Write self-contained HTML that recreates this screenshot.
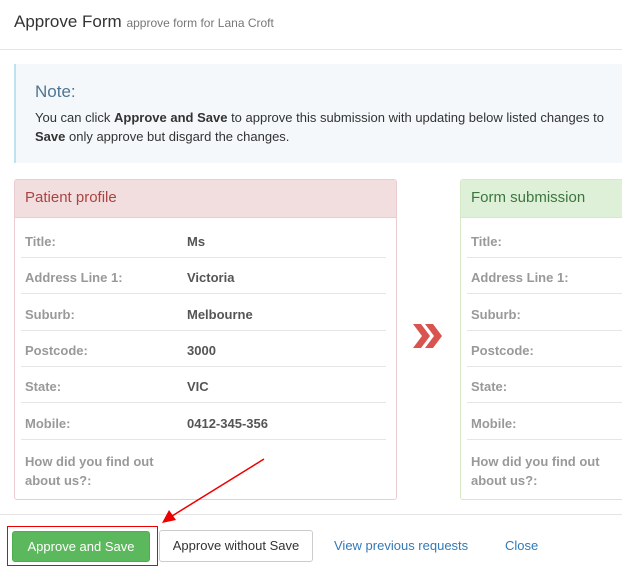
<!DOCTYPE html>
<html><head><style>
*{margin:0;padding:0;box-sizing:border-box}
body{width:622px;height:570px;background:#fff;font-family:"Liberation Sans",Arial,sans-serif;position:relative;overflow:hidden;color:#333}
.a{position:absolute;white-space:nowrap}
.lbl{position:absolute;left:10px;color:#999;font-weight:bold;font-size:13px}
.val{position:absolute;left:172px;color:#555;font-weight:bold;font-size:13px}
.sep{position:absolute;left:6px;right:10px;height:1px;background:#e6e6e6}
.panel{position:absolute;top:179px;height:321px;border:1px solid;border-radius:3px;overflow:hidden}
.ph{height:38px;border-bottom:1px solid;padding:9px 10px;font-size:15px}
</style></head><body>
<div class="a" style="left:14px;top:12px;font-size:17px;color:#333">Approve Form <span style="font-size:12px;color:#777">approve form for Lana Croft</span></div>
<div class="a" style="left:0;top:49px;width:622px;height:1px;background:#e5e5e5"></div>
<div class="a" style="left:14px;top:64px;width:608px;height:99px;background:#f4f8fa;border-left:2px solid #bfe3ee"></div>
<div class="a" style="left:35px;top:82px;font-size:17px;color:#4f7590">Note:</div>
<div class="a" style="left:35px;top:108px;font-size:13px;line-height:19px">You can click <b>Approve and Save</b> to approve this submission with updating below listed changes to<br><b>Save</b> only approve but disgard the changes.</div>

<div class="panel" style="left:14px;width:383px;border-color:#ebccd1">
<div class="ph" style="background:#f2dede;border-color:#ebccd1;color:#a94442">Patient profile</div>
</div>
<div class="panel" style="left:460px;width:180px;border-color:#d6e9c6">
<div class="ph" style="background:#dff0d8;border-color:#d6e9c6;color:#3c763d">Form submission</div>
</div>

<div class="a" style="left:15px;top:217px;width:381px;height:280px">
<div class="lbl" style="top:17px">Title:</div><div class="val" style="top:17px">Ms</div><div class="sep" style="top:40px"></div>
<div class="lbl" style="top:53px">Address Line 1:</div><div class="val" style="top:53px">Victoria</div><div class="sep" style="top:76px"></div>
<div class="lbl" style="top:90px">Suburb:</div><div class="val" style="top:90px">Melbourne</div><div class="sep" style="top:113px"></div>
<div class="lbl" style="top:126px">Postcode:</div><div class="val" style="top:126px">3000</div><div class="sep" style="top:149px"></div>
<div class="lbl" style="top:162px">State:</div><div class="val" style="top:162px">VIC</div><div class="sep" style="top:185px"></div>
<div class="lbl" style="top:199px">Mobile:</div><div class="val" style="top:199px">0412-345-356</div><div class="sep" style="top:222px"></div>
<div class="lbl" style="top:235px;line-height:19px">How did you find out<br>about us?:</div>
</div>
<div class="a" style="left:461px;top:217px;width:200px;height:280px">
<div class="lbl" style="top:17px">Title:</div><div class="sep" style="top:40px;right:0"></div>
<div class="lbl" style="top:53px">Address Line 1:</div><div class="sep" style="top:76px;right:0"></div>
<div class="lbl" style="top:90px">Suburb:</div><div class="sep" style="top:113px;right:0"></div>
<div class="lbl" style="top:126px">Postcode:</div><div class="sep" style="top:149px;right:0"></div>
<div class="lbl" style="top:162px">State:</div><div class="sep" style="top:185px;right:0"></div>
<div class="lbl" style="top:199px">Mobile:</div><div class="sep" style="top:222px;right:0"></div>
<div class="lbl" style="top:235px;line-height:19px">How did you find out<br>about us?:</div>
</div>

<svg class="a" style="left:410px;top:320px" width="36" height="32" viewBox="0 0 36 32">
<path d="M3 4 L11 4 L20 16 L11 28 L3 28 L12 16Z M15 4 L23 4 L32 16 L23 28 L15 28 L24 16Z" fill="#d9534f"/>
</svg>

<div class="a" style="left:0;top:514px;width:622px;height:1px;background:#e5e5e5"></div>
<div class="a" style="left:7px;top:526px;width:151px;height:40px;border:1px solid #e00"></div>
<div class="a" style="left:12px;top:531px;width:138px;height:31px;background:#5cb85c;border:1px solid #4cae4c;border-radius:3px;color:#fff;font-size:13px;text-align:center;line-height:29px">Approve and Save</div>
<div class="a" style="left:159px;top:530px;width:154px;height:32px;background:#fff;border:1px solid #ccc;border-radius:3px;color:#333;font-size:13px;text-align:center;line-height:30px">Approve without Save</div>
<div class="a" style="left:334px;top:538px;font-size:13px;color:#337ab7">View previous requests</div>
<div class="a" style="left:505px;top:538px;font-size:13px;color:#337ab7">Close</div>

<svg class="a" style="left:0;top:0" width="622" height="570">
<line x1="264" y1="459" x2="172" y2="516" stroke="#e00" stroke-width="1.5"/>
<path d="M162 523 L169 510 L176 520Z" fill="#e00"/>
</svg>
</body></html>
